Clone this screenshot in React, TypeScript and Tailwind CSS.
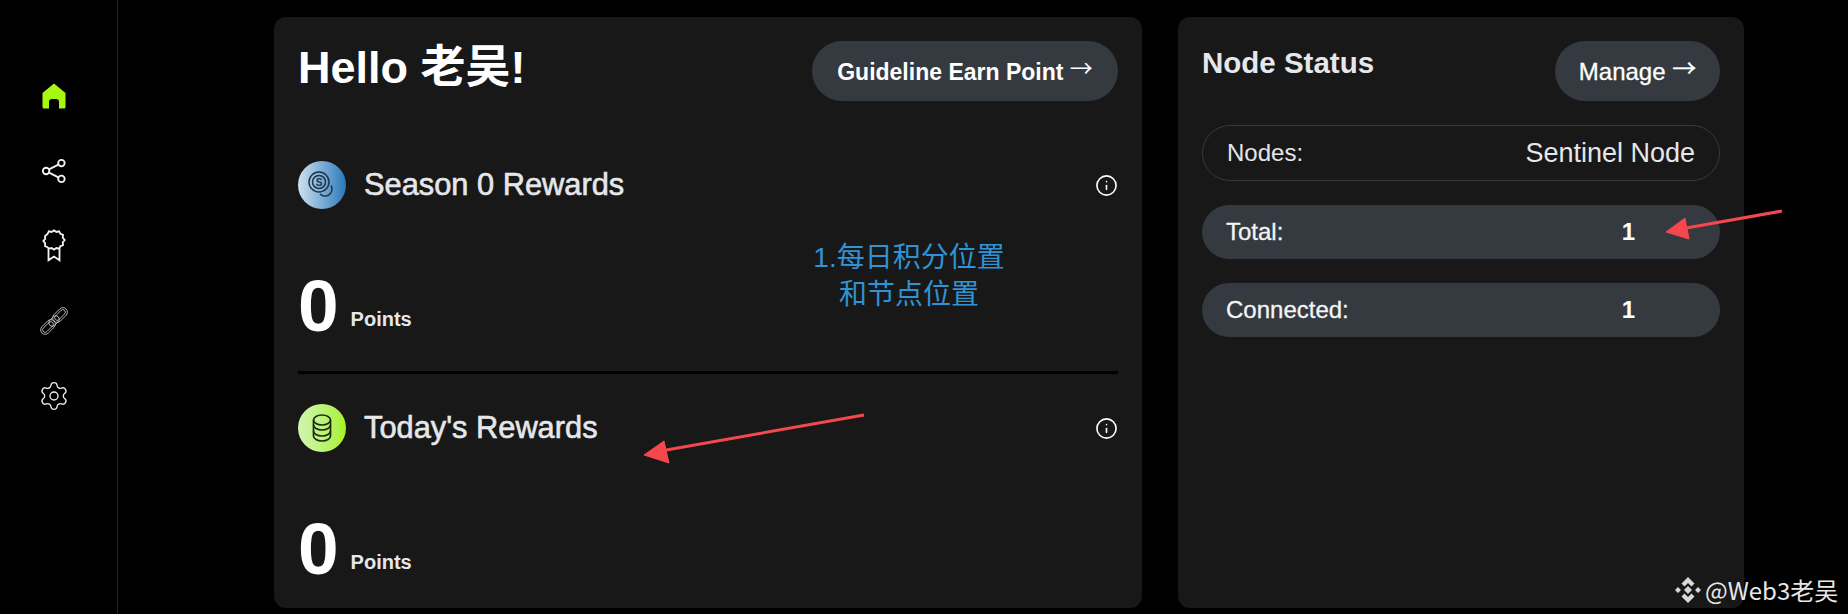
import type { ReactNode } from "react";
import { Info, Settings } from "lucide-react";

const sans = "font-['Liberation_Sans','Noto_Sans_CJK_SC',sans-serif]";

function NavSlot({ children }: { children: ReactNode }) {
  return <div className="flex h-[75px] items-center justify-center">{children}</div>;
}

function NavIcons() {
  return (
    <nav className="flex w-[108px] flex-col pt-[58px]">
      <NavSlot>
        <svg width="28" height="28" viewBox="0 0 28 28" fill="#a6f712">
          <path d="M14 1.5 25.5 11v14a1.5 1.5 0 0 1-1.5 1.5h-5V20a3 3 0 0 0-3-3h-4a3 3 0 0 0-3 3v6.5H4A1.5 1.5 0 0 1 2.5 25V11Z" />
        </svg>
      </NavSlot>
      <NavSlot>
        <svg width="26" height="26" viewBox="0 0 28 28" fill="none" stroke="#f2f2f2" strokeWidth="2">
          <circle cx="5.5" cy="14" r="3.5" />
          <circle cx="22" cy="5.5" r="3.5" />
          <circle cx="22" cy="22.5" r="3.5" />
          <path d="m8.7 12.3 10-5.2M8.7 15.7l10 5.2" />
        </svg>
      </NavSlot>
      <NavSlot>
        <svg width="26" height="33" viewBox="0 0 28 36" fill="none" stroke="#f2f2f2" strokeWidth="2">
          <path d="m14 1.5 2.6 1.700 3-.6 1.400 2.700 2.800 1.200-.2 3.100 2 2.400-2 2.400.2 3.100-2.800 1.200-1.400 2.700-3-.6-2.600 1.700-2.600-1.700-3 .6L7 19.900l-2.800-1.200.2-3.100-2-2.400 2-2.400-.2-3.100L7 5.300l1.400-2.700 3 .6Z" />
          <path d="M8 21v13l6-4 6 4V21" />
        </svg>
      </NavSlot>
      <NavSlot>
        <svg width="28" height="28" viewBox="0 0 28 28" fill="none" stroke="#d6d6d6" strokeWidth="0.8">
          <g transform="rotate(-45 14 14)">
            <rect x="-3" y="9.5" width="17" height="9" rx="4.5" />
            <rect x="-1" y="11.5" width="13" height="5" rx="2.5" />
            <rect x="14" y="9.5" width="17" height="9" rx="4.5" />
            <rect x="16" y="11.5" width="13" height="5" rx="2.5" />
            <rect x="8" y="10.5" width="12" height="7" rx="3.5" />
          </g>
        </svg>
      </NavSlot>
      <NavSlot>
        <Settings size={32} strokeWidth={1} color="#ececec" />
      </NavSlot>
    </nav>
  );
}

function CoinsIcon() {
  return (
    <svg width="48" height="48" viewBox="0 0 48 48" fill="none" stroke="#1a3650" strokeWidth="1.5">
      <circle cx="21" cy="21" r="10" />
      <circle cx="21" cy="21" r="6.5" />
      <path d="M33 24.5A7 7 0 0 1 22 33" />
      <text x="21" y="24.5" textAnchor="middle" fontSize="10" fontWeight="700" fill="#1a3650" stroke="none" fontFamily="Liberation Sans">S</text>
    </svg>
  );
}

function StackIcon() {
  return (
    <svg width="48" height="48" viewBox="0 0 48 48" fill="none" stroke="#1d2a12" strokeWidth="1.7">
      <ellipse cx="24" cy="16" rx="8.5" ry="5" />
      <path d="M15.5 16v5c0 2.800 3.800 5 8.500 5s8.500-2.200 8.500-5v-5" />
      <path d="M15.5 21v6c0 2.800 3.800 5 8.500 5s8.500-2.200 8.500-5v-6" />
      <path d="M15.5 27v5c0 2.800 3.800 5 8.500 5s8.500-2.200 8.500-5v-5" />
    </svg>
  );
}

function RewardSection({ title, icon, gradient }: { title: string; icon: ReactNode; gradient: string }) {
  return (
    <section>
      <div className="flex items-center justify-between">
        <div className="flex items-center gap-[18px]">
          <div className={`flex h-12 w-12 items-center justify-center rounded-full ${gradient}`}>{icon}</div>
          <h2 className="text-[30.8px] leading-[48px] text-[#e5e7eb] [-webkit-text-stroke:0.6px_#e5e7eb]">{title}</h2>
        </div>
        <Info size={23} strokeWidth={1.7} color="#ffffff" />
      </div>
      <div className="mt-[57px] flex items-end gap-3">
        <span className="text-[73px] font-bold leading-[80px] text-white">0</span>
        <span className="mb-[15px] text-[20px] font-bold leading-6 text-[#e5e7eb]">Points</span>
      </div>
    </section>
  );
}

function Arrow() {
  return <span className="relative top-[-3px] font-['Noto_Sans_CJK_SC',sans-serif] font-normal">→</span>;
}

function StatRow({ label, value }: { label: string; value: string }) {
  return (
    <div className="flex h-[54px] items-center justify-between rounded-full bg-[#343a40] pl-6 pr-[85px]">
      <span className="text-[24px] text-[#f3f4f6] [-webkit-text-stroke:0.3px_#f3f4f6]">{label}</span>
      <span className="text-[24px] font-bold text-white">{value}</span>
    </div>
  );
}

export default function App() {
  return (
    <div className={`relative flex h-[614px] w-[1848px] overflow-hidden bg-black ${sans}`}>
      <aside className="h-full w-[118px] shrink-0 border-r border-[#222222]">
        <NavIcons />
      </aside>

      <main className="flex gap-9 pl-[156px] pt-[17px]">
        <div className="h-[591px] w-[868px] rounded-xl bg-[#181818] px-6 pt-6">
          <header className="flex h-[60px] items-start justify-between">
            <h1 className="text-[45px] font-bold leading-[54px] text-white">Hello 老吴!</h1>
            <button className="h-[60px] w-[306px] rounded-full bg-[#343a40] text-[23px] font-bold text-white">
              Guideline Earn Point <Arrow />
            </button>
          </header>
          <div className="mt-[60px]">
            <RewardSection
              title="Season 0 Rewards"
              icon={<CoinsIcon />}
              gradient="bg-gradient-to-r from-[#cfe2f0] to-[#2379b8]"
            />
          </div>
          <div className="mt-[25px] h-[3px] bg-black" />
          <div className="mt-[30px]">
            <RewardSection
              title="Today's Rewards"
              icon={<StackIcon />}
              gradient="bg-gradient-to-r from-[#d2f5b0] to-[#a6f212]"
            />
          </div>
        </div>

        <div className="h-[591px] w-[566px] rounded-xl bg-[#181818] px-6 pt-6">
          <header className="flex h-[60px] items-start justify-between">
            <h2 className="mt-1 text-[29.5px] font-bold leading-9 text-[#e5e7eb]">Node Status</h2>
            <button className="h-[60px] w-[165px] rounded-full bg-[#343a40] text-[24px] text-white [-webkit-text-stroke:0.3px_#ffffff]">
              Manage <Arrow />
            </button>
          </header>
          <div className="mt-6 flex h-14 items-center justify-between rounded-full border border-[#3a3a3a] px-6">
            <span className="text-[24px] text-[#e5e7eb]">Nodes:</span>
            <span className="text-[27px] text-[#e5e7eb]">Sentinel Node</span>
          </div>
          <div className="mt-6 flex flex-col gap-6">
            <StatRow label="Total:" value="1" />
            <StatRow label="Connected:" value="1" />
          </div>
        </div>
      </main>

      {/* annotations pasted over the screenshot */}
      <p className="absolute left-[789px] top-[239px] w-[240px] text-center text-[28px] leading-[37px] text-[#2f93d6]">
        1.每日积分位置
        <br />
        和节点位置
      </p>
      <svg className="absolute left-0 top-0 pointer-events-none" width="1848" height="614" fill="#f4484e" stroke="#f4484e">
        <path d="M864 415 655 452" strokeWidth="3" fill="none" />
        <path d="m644 455 20-14 5 22Z" strokeWidth="1" />
        <path d="M1782 211 1675 230" strokeWidth="3" fill="none" />
        <path d="m1666 232 19-14 4 21Z" strokeWidth="1" />
      </svg>
      <div className="absolute left-[1674px] top-[576px] flex items-center gap-[3px]">
        <svg width="28" height="28" viewBox="0 0 28 28" fill="#d8d8d8">
          <path d="m14 1 6.5 6.5-3 3L14 7l-3.5 3.5-3-3ZM14 27l-6.5-6.500 3-3L14 21l3.500-3.500 3 3ZM4 11l3 3-3 3-3-3ZM24 11l3 3-3 3-3-3ZM14 10l4 4-4 4-4-4Z" />
        </svg>
        <span className="font-['Noto_Sans_CJK_SC',sans-serif] text-[24px] leading-7 text-[#e8e8e8]">@Web3老吴</span>
      </div>
    </div>
  );
}
